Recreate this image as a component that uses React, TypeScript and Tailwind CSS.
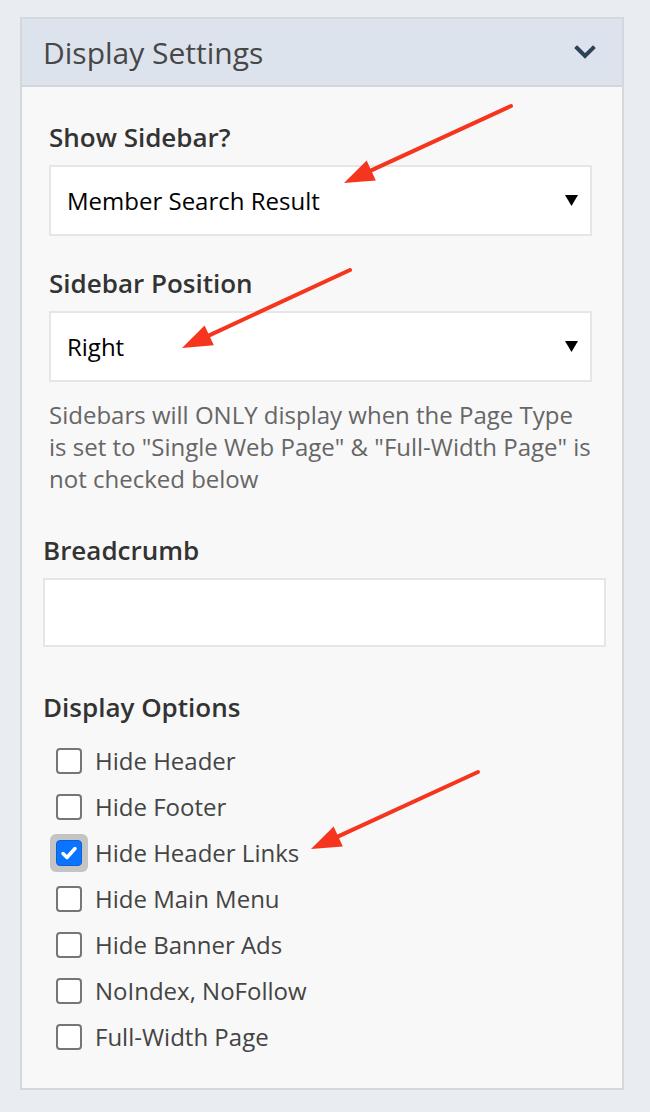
const options = [
  { label: "Hide Header", checked: false },
  { label: "Hide Footer", checked: false },
  { label: "Hide Header Links", checked: true },
  { label: "Hide Main Menu", checked: false },
  { label: "Hide Banner Ads", checked: false },
  { label: "NoIndex, NoFollow", checked: false },
  { label: "Full-Width Page", checked: false },
];

function SelectBox({ value }: { value: string }) {
  return (
    <div className="mt-[13px] h-[71px] bg-white border-2 border-[#e6e6e6] flex items-center justify-between pl-4 pr-[12px]">
      <span className="text-[24px] text-black">{value}</span>
      <svg width="13" height="11" viewBox="0 0 13 11">
        <polygon points="0,0 13,0 6.5,11" fill="black" />
      </svg>
    </div>
  );
}

function Checkbox({ label, checked }: { label: string; checked: boolean }) {
  return (
    <div className="h-[46px] flex items-center">
      <div className="w-[38px] h-[38px] flex items-center justify-center">
        {checked ? (
          <div className="w-[38px] h-[38px] rounded-[6px] bg-[#c4c4c4] flex items-center justify-center">
            <div className="w-[26px] h-[26px] rounded-[4px] bg-[#0a74ff] border border-[#0a5fd6] flex items-center justify-center">
              <svg width="18" height="16" viewBox="0 0 18 16" fill="none">
                <path d="M3 8.5 L7 12.5 L15 3.5" stroke="white" strokeWidth="3.5" strokeLinecap="round" strokeLinejoin="round" />
              </svg>
            </div>
          </div>
        ) : (
          <div className="w-[26px] h-[26px] rounded-[4px] bg-white border-2 border-[#767676]" />
        )}
      </div>
      <span className="ml-[7px] text-[24px] text-[#444]">{label}</span>
    </div>
  );
}

function Arrow({ x1, y1, x2, y2 }: { x1: number; y1: number; x2: number; y2: number }) {
  const a = Math.atan2(y2 - y1, x2 - x1);
  const len = 30;
  const half = 11;
  const bx = x2 - len * Math.cos(a);
  const by = y2 - len * Math.sin(a);
  const px = -Math.sin(a) * half;
  const py = Math.cos(a) * half;
  return (
    <g>
      <line x1={x1} y1={y1} x2={bx} y2={by} stroke="#f5351d" strokeWidth="4" strokeLinecap="round" />
      <polygon points={`${x2},${y2} ${bx + px},${by + py} ${bx - px},${by - py}`} fill="#f5351d" />
    </g>
  );
}

export default function App() {
  return (
    <div className="relative min-h-[1112px] bg-[#e9edf2] pt-[17px] px-[20px] pb-[20px]" style={{ fontFamily: "'Open Sans', sans-serif" }}>
      <div className="w-[604px] border-2 border-[#d4d7db] bg-[#f8f8f8]">
        {/* Header */}
        <div className="h-[68px] bg-[#dde3ec] border-b-2 border-[#d2d6dc] flex items-center justify-between pl-[21px] pr-[26px]">
          <h2 className="text-[30px] text-[#474747]">Display Settings</h2>
          <svg width="22" height="14" viewBox="0 0 22 14" fill="none">
            <path d="M3 3 L11 11 L19 3" stroke="#2c4257" strokeWidth="4" strokeLinecap="square" />
          </svg>
        </div>

        {/* Sidebar settings */}
        <div className="pt-[35px] pl-[27px] pr-[30px]">
          <label className="block h-[30px] leading-[30px] text-[26px] font-semibold text-[#333]">Show Sidebar?</label>
          <SelectBox value="Member Search Result" />
          <label className="block mt-[32px] h-[30px] leading-[30px] text-[26px] font-semibold text-[#333]">Sidebar Position</label>
          <SelectBox value="Right" />
          <p className="mt-[17px] mr-[-1px] text-[24px] leading-[32px] text-[#666]">
            Sidebars will ONLY display when the Page Type is set to "Single Web Page" &amp; "Full-Width Page" is not checked below
          </p>
        </div>

        {/* Breadcrumb + options */}
        <div className="pl-[21px] pr-[16px] pb-[28px]">
          <label className="block mt-[40px] h-[30px] leading-[30px] text-[26px] font-semibold text-[#333]">Breadcrumb</label>
          <div className="mt-[13px] h-[69px] bg-white border-2 border-[#e6e6e6]" />
          <label className="block mt-[45px] h-[30px] leading-[30px] text-[26px] font-semibold text-[#333]">Display Options</label>
          <div className="mt-[16px] pl-[7px] flex flex-col">
            {options.map((o) => (
              <Checkbox key={o.label} label={o.label} checked={o.checked} />
            ))}
          </div>
        </div>
      </div>

      {/* Annotation arrows */}
      <svg className="absolute inset-0 pointer-events-none" width="650" height="1112">
        <Arrow x1={511} y1={106} x2={344} y2={183} />
        <Arrow x1={350} y1={270} x2={182} y2={348} />
        <Arrow x1={478} y1={772} x2={311} y2={849} />
      </svg>
    </div>
  );
}
